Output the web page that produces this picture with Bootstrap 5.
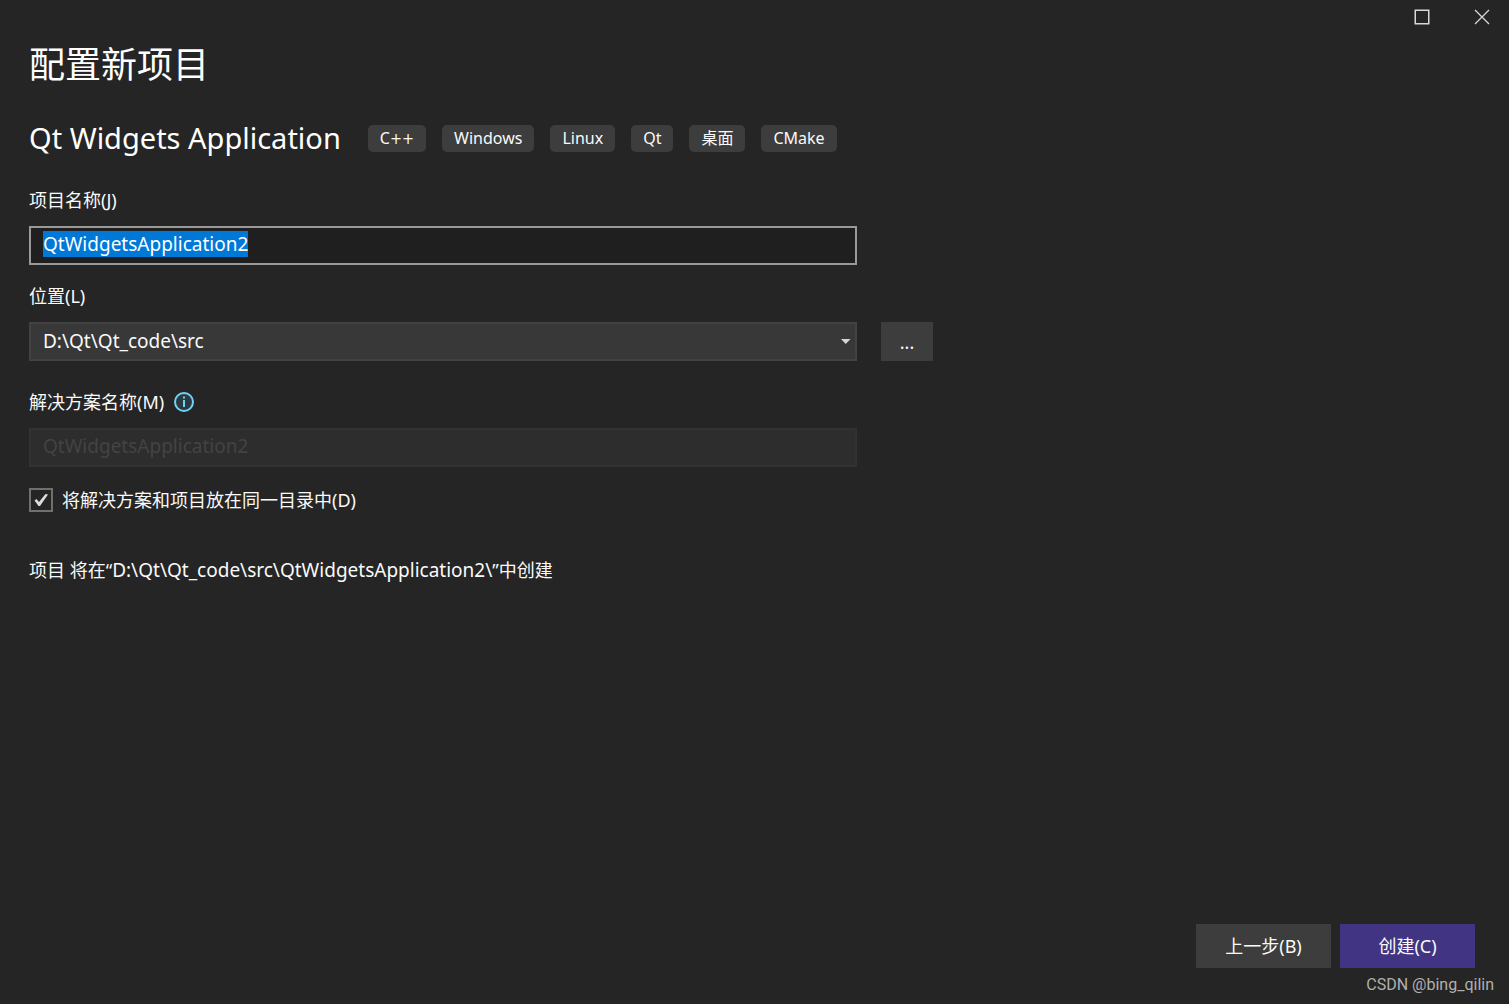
<!DOCTYPE html>
<html lang="zh-CN" data-bs-theme="dark">
<head>
<meta charset="utf-8">
<meta name="viewport" content="width=device-width, initial-scale=1">
<title>配置新项目</title>
<link href="https://cdn.jsdelivr.net/npm/bootstrap@5.3.0/dist/css/bootstrap.min.css" rel="stylesheet">
<style>
  body { background: #252525; color: #fafafa; font-family: "Noto Sans", "Noto Sans CJK SC", sans-serif; font-size: 18px; line-height: 24px; }
  .caption-bar { gap: 6px; }
  .caption-btn { width: 54px; height: 34px; color: #d8d8d8; border: 0; border-radius: 0; }
  .main-pane { padding: 7px 29px 0; }
  .page-title { font-size: 36px; line-height: 48px; font-weight: 400; }
  .template-row { margin: 29px 0 30px; column-gap: 27px; }
  .template-name { font-size: 29px; line-height: 40px; font-weight: 400; }
  .tag-chip { background: #3d3d3d; border-radius: 5px; font-size: 16px; line-height: 19px; padding: 4px 12px; font-weight: 400; color: #fafafa; }
  .plus-sign { font-family: "DejaVu Sans Condensed", "DejaVu Sans", sans-serif; }
  .form-col { flex: 0 1 828px; min-width: 0; }
  .location-row { margin-top: 19px; }
  .solution-row { margin-top: 29px; }
  .field-label { line-height: 24px; margin-bottom: 14px; }
  .info-label { gap: 10px; }
  .field-box, .field-box:focus { height: 39px; border: 2px solid #424242; border-radius: 0; background-color: #383838; color: #fafafa; font-size: 19px; line-height: 25px; padding: 3px 12px 7px; box-shadow: none; }
  .field-box.name-box { background-color: #1f1f1f; border-color: #999; }
  .field-box.name-box::selection { background: #0078d7; color: #fff; }
  .field-box.place-box { padding-top: 5px; padding-bottom: 5px; background-image: url("data:image/svg+xml,%3Csvg xmlns='http://www.w3.org/2000/svg' viewBox='0 0 10 5'%3E%3Cpath d='M0 0h9.500L4.750 5z' fill='%23d6d6d6'/%3E%3C/svg%3E"); background-size: 10px 5px; background-position: right 4px center; }
  .field-box:disabled { background-color: #2d2d2d; border-color: #323232; color: #434343; opacity: 1; }
  .wizard-btn { background: #3d3d3d; color: #fafafa; border: 0; border-radius: 0; font-size: 18px; line-height: 24px; }
  .browse-btn { width: 52px; height: 39px; }
  .footer-btn { width: 135px; height: 44px; }
  .create-btn { background: #413483; }
  .check-row { margin-top: 21px; gap: 9px; }
  .form-check-input.same-dir, .form-check-input.same-dir:checked { width: 24px; height: 24px; background-color: #252525; border: 2px solid #707070; border-radius: 0; box-shadow: none; margin: 0; }
  .form-check-input.same-dir:checked { background-image: url("data:image/svg+xml,%3Csvg xmlns='http://www.w3.org/2000/svg' viewBox='0 0 20 20'%3E%3Cpath d='M3.500 10.500L5.500 9L8 12L14.500 4L17 4.500L9 16L7.500 16Z' fill='%23dcdcdc'/%3E%3C/svg%3E"); }
  .result-note { margin-top: 46px; }
  .result-path { font-size: 19px; }
  .footer-actions { gap: 9px; padding: 0 34px 8px; }
  .watermark { font-family: Roboto, sans-serif; font-size: 16px; line-height: 18px; color: #b0b0b0; padding: 0 15px 10px; }
</style>
</head>
<body>
<div class="min-vh-100 d-flex flex-column">
  <div class="d-flex justify-content-end caption-bar">
    <button class="btn caption-btn p-0 d-flex align-items-center justify-content-center" type="button" aria-label="最大化">
      <svg width="16" height="16" viewBox="0 0 16 16" fill="none" stroke="currentColor" stroke-width="1.500"><rect x="1.250" y="1.250" width="13.500" height="13.500"/></svg>
    </button>
    <button class="btn caption-btn p-0 d-flex align-items-center justify-content-center" type="button" aria-label="关闭">
      <svg width="16" height="16" viewBox="0 0 16 16" fill="none" stroke="currentColor" stroke-width="1.300"><path d="M1 1L15 15M15 1L1 15"/></svg>
    </button>
  </div>
  <main class="flex-grow-1 main-pane">
    <h1 class="page-title mb-0">配置新项目</h1>
    <div class="d-flex flex-wrap align-items-center template-row">
      <h2 class="template-name mb-0">Qt Widgets Application</h2>
      <div class="d-flex flex-wrap gap-3">
        <span class="badge tag-chip">C<span class="plus-sign">++</span></span>
        <span class="badge tag-chip">Windows</span>
        <span class="badge tag-chip">Linux</span>
        <span class="badge tag-chip">Qt</span>
        <span class="badge tag-chip">桌面</span>
        <span class="badge tag-chip">CMake</span>
      </div>
    </div>
    <form>
      <div class="d-flex">
        <div class="form-col">
          <label class="field-label" for="projectName">项目名称(J)</label>
          <input class="form-control field-box name-box" id="projectName" type="text" value="QtWidgetsApplication2" spellcheck="false" autofocus>
        </div>
      </div>
      <div class="d-flex align-items-end gap-4 location-row">
        <div class="form-col">
          <label class="field-label" for="location">位置(L)</label>
          <select class="form-select field-box place-box" id="location"><option>D:\Qt\Qt_code\src</option></select>
        </div>
        <button class="btn wizard-btn browse-btn p-0" type="button" aria-label="浏览">...</button>
      </div>
      <div class="d-flex solution-row">
        <div class="form-col">
          <div class="d-flex align-items-center field-label info-label">
            <label for="solutionName">解决方案名称(M)</label>
            <svg width="20" height="20" viewBox="0 0 20 20" aria-hidden="true"><circle cx="10" cy="10" r="9" fill="#2b3a40" stroke="#6fd3f5" stroke-width="2"/><rect x="9" y="4.500" width="2" height="2" fill="#6fd3f5"/><rect x="9" y="8" width="2" height="7" fill="#6fd3f5"/></svg>
          </div>
          <input class="form-control field-box" id="solutionName" type="text" value="QtWidgetsApplication2" disabled>
        </div>
      </div>
      <div class="d-flex align-items-center check-row">
        <input class="form-check-input same-dir" type="checkbox" id="sameDir" checked>
        <label for="sameDir">将解决方案和项目放在同一目录中(D)</label>
      </div>
      <p class="result-note mb-0">项目 将在“<span class="result-path">D:\Qt\Qt_code\src\QtWidgetsApplication2\</span>”中创建</p>
    </form>
  </main>
  <footer>
    <div class="d-flex justify-content-end footer-actions">
      <button class="btn wizard-btn footer-btn p-0" type="button">上一步(B)</button>
      <button class="btn wizard-btn footer-btn create-btn p-0" type="submit">创建(C)</button>
    </div>
    <div class="watermark text-end">CSDN @bing_qilin</div>
  </footer>
</div>
<script src="https://cdn.jsdelivr.net/npm/bootstrap@5.3.0/dist/js/bootstrap.bundle.min.js"></script>
<script>
  const nameBox = document.getElementById('projectName');
  nameBox.focus();
  nameBox.select();
</script>
</body>
</html>
